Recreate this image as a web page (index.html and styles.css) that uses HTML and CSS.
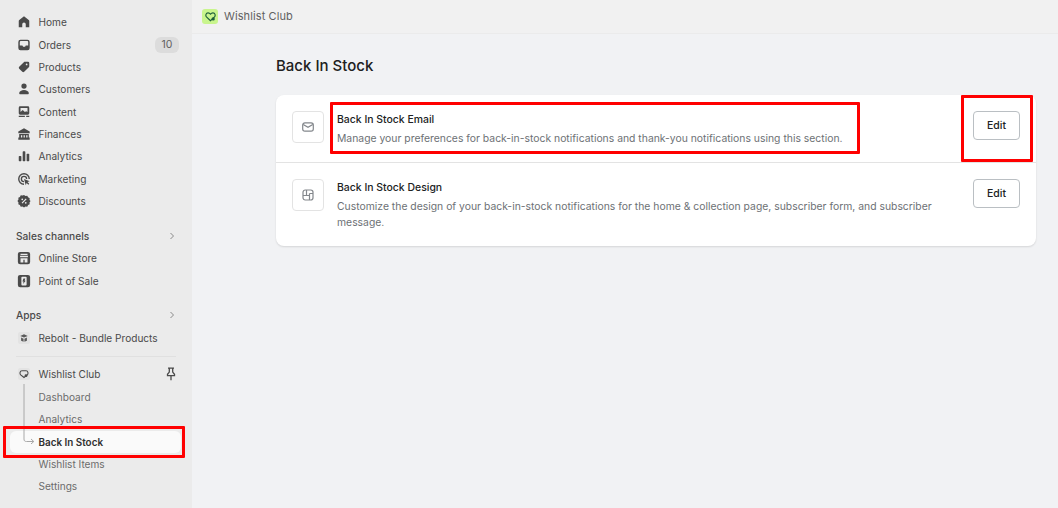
FILE: index.html
```html
<!DOCTYPE html>
<html lang="en">
<head>
<meta charset="utf-8">
<title>Back In Stock</title>
<link rel="stylesheet" href="styles.css">
</head>
<body>
<div class="app">
  <aside class="sidebar">
    <nav class="group first">
      <a class="item"><svg class="ico" viewBox="0 0 16 16"><path d="M8 1.500 2.600 5.600c-.4.3-.6.7-.6 1.200V14h4v-3.500a2 2 0 0 1 4 0V14h4V6.800c0-.5-.2-.9-.6-1.200z"/></svg><span>Home</span></a>
      <a class="item"><svg class="ico" viewBox="0 0 16 16"><path fill-rule="evenodd" d="M4 2h8a2.500 2.500 0 0 1 2.500 2.500v7A2.500 2.500 0 0 1 12 14H4a2.500 2.500 0 0 1-2.500-2.500v-7A2.500 2.500 0 0 1 4 2zm-.8 6.500V4.800c0-.7.6-1.300 1.300-1.300h7c.7 0 1.300.6 1.300 1.300v3.700h-2.300c-.4 0-.6.2-.8.500l-.5 1H7l-.5-1c-.2-.3-.4-.5-.8-.5z"/></svg><span>Orders</span><b class="badge">10</b></a>
      <a class="item"><svg class="ico" viewBox="0 0 16 16"><path fill-rule="evenodd" d="M9 2h3.500A1.500 1.500 0 0 1 14 3.500V7c0 .5-.2.900-.5 1.200l-5.300 5.300a1.500 1.500 0 0 1-2.100 0l-3.600-3.600a1.500 1.500 0 0 1 0-2.100l5.300-5.300C8.100 2.200 8.500 2 9 2zm2 2a1 1 0 1 0 0 2 1 1 0 0 0 0-2z"/></svg><span>Products</span></a>
      <a class="item"><svg class="ico" viewBox="0 0 16 16"><circle cx="8" cy="4.700" r="3"/><path d="M8 9c-3 0-5.200 1.500-5.500 3.500-.1.800.5 1.500 1.300 1.500h8.400c.8 0 1.400-.7 1.300-1.500C13.200 10.500 11 9 8 9z"/></svg><span>Customers</span></a>
      <a class="item"><svg class="ico" viewBox="0 0 16 16"><path fill-rule="evenodd" d="M3.500 1.500h9A1.500 1.500 0 0 1 14 3v6.500a1.500 1.500 0 0 1-1.500 1.500h-9A1.500 1.500 0 0 1 2 9.500V3a1.500 1.500 0 0 1 1.500-1.500zm.5 2V8l2.500-2.200L9 8l1.500-1 1.500 1V3.500z"/><path d="M2 12.300h7v1.400H2zM10.500 12.300H14v1.400h-3.500z"/></svg><span>Content</span></a>
      <a class="item"><svg class="ico" viewBox="0 0 16 16"><path fill-rule="evenodd" d="M8 1.500 14.500 5v2h-13V5zM2.500 8h11v4h1v2.500h-13V12h1zm2 1.500V12h1.500V9.500zm3 0V12H9V9.500zm3 0V12H12V9.500z"/></svg><span>Finances</span></a>
      <a class="item"><svg class="ico" viewBox="0 0 16 16"><rect x="2" y="8" width="3" height="6" rx=".8"/><rect x="6.500" y="2.500" width="3" height="11.500" rx=".8"/><rect x="11" y="5.500" width="3" height="8.500" rx=".8"/></svg><span>Analytics</span></a>
      <a class="item"><svg class="ico" viewBox="0 0 16 16"><path fill="none" stroke="currentColor" stroke-width="1.600" d="M14 8a6 6 0 1 0-6 6"/><path fill="none" stroke="currentColor" stroke-width="1.500" d="M11 8a3 3 0 1 0-3 3"/><path d="m8 8 6.500 2.500-2.500 1 2 2-1 1-2-2-1 2.500z"/></svg><span>Marketing</span></a>
      <a class="item"><svg class="ico" viewBox="0 0 16 16"><path fill-rule="evenodd" d="m8 1 1.700 1.200 2-.2 1 1.800 1.800 1-.2 2L15.500 8l-1.200 1.700.2 2-1.800 1-1 1.800-2-.2L8 15.500l-1.700-1.200-2 .2-1-1.800-1.800-1 .2-2L.5 8l1.200-1.700-.2-2 1.800-1 1-1.800 2 .2zM10 5 5.300 10l.9.900L11 6zM6 5a1 1 0 1 0 0 2 1 1 0 0 0 0-2zm4 4a1 1 0 1 0 0 2 1 1 0 0 0 0-2z"/></svg><span>Discounts</span></a>
    </nav>

    <nav class="group channels">
      <div class="heading"><span>Sales channels</span><svg class="chev" viewBox="0 0 8 8"><path d="m2.500 1 3 3-3 3"/></svg></div>
      <a class="item"><svg class="ico" viewBox="0 0 16 16"><path fill-rule="evenodd" d="M3.500 1h9a2.500 2.500 0 0 1 2.500 2.500v9a2.500 2.500 0 0 1-2.500 2.500h-9A2.500 2.500 0 0 1 1 12.500v-9A2.500 2.500 0 0 1 3.500 1zM4 3v1.500h8V3zM3.500 5.500V7h9V5.500zM4 8.300V13h3.300v-3h1.400v3H12V8.300z"/></svg><span>Online Store</span></a>
      <a class="item"><svg class="ico" viewBox="0 0 16 16"><path fill-rule="evenodd" d="M3.500 1h9a2.500 2.500 0 0 1 2.500 2.500v9a2.500 2.500 0 0 1-2.500 2.500h-9A2.500 2.500 0 0 1 1 12.500v-9A2.500 2.500 0 0 1 3.500 1zM6 3c-.6 0-1 .4-1 1v8c0 .6.400 1 1 1h4c.6 0 1-.4 1-1V4c0-.6-.4-1-1-1zm1.300 2h2.200L8.700 7.600h1.200L7 11.500l.5-2.800H6.300z"/></svg><span>Point of Sale</span></a>
    </nav>

    <nav class="group apps">
      <div class="heading"><span>Apps</span><svg class="chev" viewBox="0 0 8 8"><path d="m2.500 1 3 3-3 3"/></svg></div>
      <a class="item"><span class="appicon"><svg viewBox="0 0 12 12"><path d="M6 1.500 10.500 3.500 6 5.500 1.500 3.500zM2.500 5.500l3 1.300v3.700l-3-1.300zM9.500 5.500l-3 1.300v3.700l3-1.300z"/></svg></span><span>Rebolt - Bundle Products</span></a>
    </nav>

    <nav class="group wishlist">
      <a class="item"><span class="appicon"><svg viewBox="0 0 12 12"><path fill="none" stroke="#4a4a4a" stroke-width="1.300" d="M6 10.200 2 7C.6 5.500 1 2 3.500 2h5C11 2 11.400 5.500 10 7z"/><circle cx="8.400" cy="8" r="1.700" fill="#4a4a4a"/></svg></span><span>Wishlist Club</span>
        <svg class="pin" viewBox="0 0 12 14"><path d="M3 1.200h6M4.300 1.200v3.900L2.500 7.300v1.400h7V7.300L7.700 5.100V1.200M6 8.700v4.500"/></svg></a>
      <div class="subnav">
        <a class="sub">Dashboard</a>
        <a class="sub">Analytics</a>
        <a class="sub active"><svg class="tree" viewBox="0 0 12 60"><path d="M1 0V55c0 1.800.7 2.500 2.500 2.500H10.500M8 55l2.800 2.500L8 60"/></svg>Back In Stock</a>
        <a class="sub">Wishlist Items</a>
        <a class="sub">Settings</a>
      </div>
    </nav>
    <div class="mark mark-nav"></div>
  </aside>

  <div class="main">
    <header class="topbar">
      <span class="logo"><svg viewBox="0 0 16 16"><path fill="none" stroke="#1d5f3a" stroke-width="1.400" d="M8 13.200 3 8.500C1.400 6.800 2.400 3.500 5 3.500c1.400 0 2.400.8 3 1.600.6-.8 1.600-1.600 3-1.600 2.600 0 3.600 3.300 2 5z"/><circle cx="11.300" cy="11" r="2" fill="#1d5f3a"/></svg></span>
      <span class="appname">Wishlist Club</span>
    </header>
    <main class="content">
      <h1>Back In Stock</h1>
      <section class="card">
        <div class="row">
          <span class="rowicon"><svg viewBox="0 0 12 12"><rect x=".7" y="1.800" width="10.600" height="8.400" rx="2.200"/><path d="M1.200 3.500 6 6.300l4.800-2.800"/></svg></span>
          <div class="rowtext">
            <h2>Back In Stock Email</h2>
            <p>Manage your preferences for back-in-stock notifications and thank-you notifications using this section.</p>
          </div>
          <button class="edit">Edit</button>
          <div class="mark mark-text"></div>
          <div class="mark mark-edit"></div>
        </div>
        <div class="row">
          <span class="rowicon"><svg viewBox="0 0 12 12"><rect x="1" y="1" width="10" height="10" rx="2.200"/><path d="M1 6.500h6.500M4.500 1v5.500M7.500 4.500V11M7.500 4.500H11"/></svg></span>
          <div class="rowtext">
            <h2>Back In Stock Design</h2>
            <p>Customize the design of your back-in-stock notifications for the home &amp; collection page, subscriber form, and subscriber message.</p>
          </div>
          <button class="edit">Edit</button>
        </div>
      </section>
    </main>
  </div>
</div>
</body>
</html>
```

FILE: styles.css
```css
* { box-sizing: border-box; }
html, body { margin: 0; height: 100%; }
body {
  font-family: Inter, "Liberation Sans", sans-serif;
  font-size: 10.100px;
  color: #303030;
  background: #f1f2f4;
  overflow: hidden;
}
.app { display: flex; height: 508px; }

.sidebar {
  position: relative;
  width: 192px;
  flex: none;
  background: #ebebeb;
  padding: 11px 16px 0 16px;
}
.group.channels { margin-top: 12.700px; }
.group.apps { margin-top: 12.400px; }
.group.wishlist {
  margin-top: 7.600px;
  padding-top: 5.500px;
  border-top: 1px solid #e0e0e0;
}
.item {
  display: flex;
  align-items: center;
  height: 22.350px;
  color: #4a4a4a;
  white-space: nowrap;
}
.ico {
  width: 14px;
  height: 14px;
  margin: 0 7.500px 0 1px;
  flex: none;
  fill: #4a4a4a;
  color: #4a4a4a;
}
.badge {
  margin-left: auto;
  margin-right: -3px;
  width: 24px;
  height: 16px;
  border-radius: 6px;
  background: #dcdcdc;
  color: #616161;
  font-weight: 400;
  font-size: 10.500px;
  text-align: center;
  line-height: 16px;
}
.heading {
  display: flex;
  align-items: center;
  justify-content: space-between;
  height: 22.350px;
  color: #4a4a4a;
  font-size: 10.200px;
  font-weight: 500;
}
.chev { width: 8px; height: 8px; fill: none; stroke: #8a8a8a; stroke-width: 1; }
.appicon {
  width: 12px;
  height: 12px;
  margin: 0 8.500px 0 2px;
  flex: none;
  background: #e3e3e3;
  border-radius: 2px;
  display: flex;
  align-items: center;
  justify-content: center;
}
.appicon svg { width: 10px; height: 10px; fill: #5a5a5a; }
.pin { width: 12px; height: 14px; margin-left: auto; margin-right: -1px; fill: none; stroke: #4a4a4a; stroke-width: 1.300; }

.subnav { padding-top: .500px; }
.sub {
  position: relative;
  display: block;
  height: 22.350px;
  line-height: 22.350px;
  padding-left: 22.500px;
  color: #6b6b6b;
}
.sub.active {
  margin: .500px -5px -.500px -6px;
  padding-left: 28.500px;
  background: #fafafa;
  border-radius: 6px;
  font-size: 9.900px;
  font-weight: 600;
  color: #303030;
}
.tree {
  position: absolute;
  left: 13px;
  top: -47px;
  width: 12px;
  height: 60px;
  fill: none;
  stroke: #a8a8a8;
  stroke-width: 1;
}

.main { flex: 1; min-width: 0; }
.topbar {
  display: flex;
  align-items: center;
  height: 34px;
  padding: 0 0 1px 10px;
  border-bottom: 1px solid #ebebeb;
  background: #f1f1f1;
}
.logo {
  width: 16px;
  height: 15px;
  border-radius: 3px;
  background: #c9f58d;
  display: flex;
  align-items: center;
  justify-content: center;
  margin-right: 6px;
}
.logo svg { width: 13px; height: 13px; }
.appname { font-size: 11px; color: #616161; letter-spacing: .1px; }
.content { padding: 21px 22px 0 84px; }
h1 {
  margin: 0 0 18px;
  font-size: 15px;
  line-height: 22px;
  font-weight: 500;
  color: #202020;
}
.card {
  background: #fff;
  border-radius: 8px;
  box-shadow: 0 1px 2px rgba(0, 0, 0, .12);
}
.row {
  position: relative;
  display: flex;
  align-items: flex-start;
  padding: 16px 16px 15px;
}
.row + .row { border-top: 1px solid #e3e3e3; }
.rowicon {
  width: 32px;
  height: 32px;
  flex: none;
  border: 1px solid #e3e3e3;
  border-radius: 4px;
  display: flex;
  align-items: center;
  justify-content: center;
  margin-right: 13px;
}
.rowicon svg { width: 12px; height: 12px; fill: none; stroke: #83878c; stroke-width: 1.200; }
.rowtext { flex: 1; padding: 1px 30px 0 0; }
h2 {
  margin: 0;
  font-size: 10.450px;
  line-height: 16px;
  font-weight: 500;
  color: #202223;
}
.rowtext p {
  margin: 3px 0 0;
  font-size: 10.380px;
  line-height: 16px;
  color: #6d7175;
}
.edit {
  flex: none;
  width: 47px;
  height: 29px;
  padding: 0;
  border: 1px solid #babfc3;
  border-radius: 4px;
  background: #fff;
  font: 500 10.500px Inter, "Liberation Sans", sans-serif;
  color: #202223;
}

.mark { position: absolute; border: 3px solid #f00; border-radius: 1px; pointer-events: none; }
.mark-nav { left: 3px; top: 426px; width: 182px; height: 32px; }
.mark-text { left: 54px; top: 7px; width: 530px; height: 52px; }
.mark-edit { right: 3px; top: 0; width: 72px; height: 67px; }
```
